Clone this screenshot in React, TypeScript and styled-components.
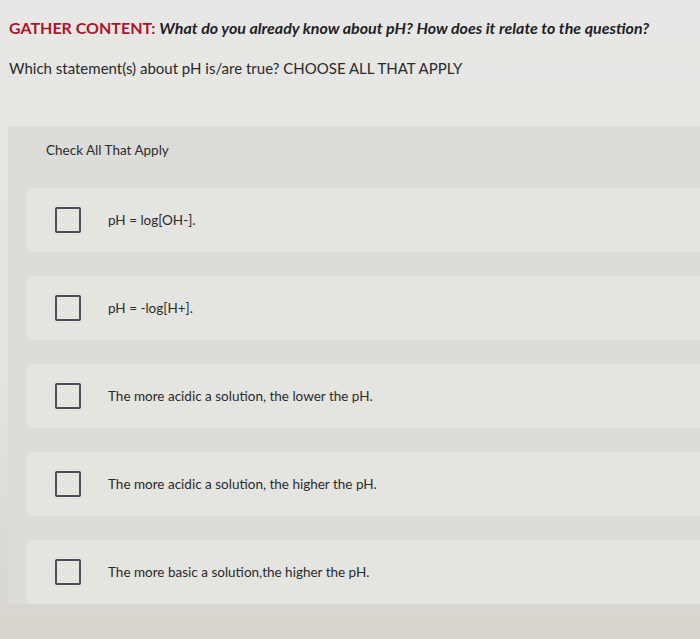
import React from "react";
import styled, { createGlobalStyle } from "styled-components";

const Global = createGlobalStyle`
  html, body { margin: 0; padding: 0; }
  body {
    background: linear-gradient(180deg, #e7e7e5 0%, #e4e3e0 60%, #d8d4ce 100%);
    font-family: Lato, "Open Sans", Arial, sans-serif;
    color: #2b2b2b;
    width: 700px;
    height: 639px;
    overflow: hidden;
  }
`;

const Page = styled.div`
  display: flex;
  flex-direction: column;
  padding: 18px 0 0 9px;
`;

const Title = styled.h1`
  margin: 0;
  font-size: 16px;
  font-weight: 700;
  line-height: 20px;
  color: #1f1f28;
`;

const Tag = styled.span`
  color: #a9162c;
  font-style: normal;
`;

const Question = styled.em`
  font-style: italic;
`;

const Prompt = styled.p`
  margin: 20px 0 0;
  font-size: 15px;
  line-height: 20px;
  color: #2a2a2a;
`;

const Panel = styled.section`
  margin-top: 48px;
  margin-left: -1px;
  background: #dcdcd9;
  display: flex;
  flex-direction: column;
  padding: 0 0 0 19px;
`;

const PanelHead = styled.div`
  height: 47px;
  display: flex;
  align-items: center;
  padding-left: 19px;
  font-size: 13.5px;
  color: #2d2d2d;
`;

const List = styled.div`
  display: flex;
  flex-direction: column;
  gap: 24px;
  padding-top: 15px;
`;

const Row = styled.label`
  height: 64px;
  background: #e4e4e1;
  display: flex;
  align-items: center;
  padding-left: 28px;
  gap: 27px;
`;

const Box = styled.span`
  width: 22px;
  height: 22px;
  border: 2px solid #4b5058;
  border-radius: 2px;
  flex: none;
`;

const OptText = styled.span`
  font-size: 13.5px;
  color: #2b2b2b;
`;

const options = [
  "pH = log[OH-].",
  "pH = -log[H+].",
  "The more acidic a solution, the lower the pH.",
  "The more acidic a solution, the higher the pH.",
  "The more basic a solution,the higher the pH.",
];

export default function App() {
  return (
    <>
      <Global />
      <Page>
        <Title>
          <Tag>GATHER CONTENT:</Tag>{" "}
          <Question>What do you already know about pH? How does it relate to the question?</Question>
        </Title>
        <Prompt>Which statement(s) about pH is/are true? CHOOSE ALL THAT APPLY</Prompt>
        <Panel>
          <PanelHead>Check All That Apply</PanelHead>
          <List>
            {options.map((o) => (
              <Row key={o}>
                <Box />
                <OptText>{o}</OptText>
              </Row>
            ))}
          </List>
        </Panel>
      </Page>
    </>
  );
}
